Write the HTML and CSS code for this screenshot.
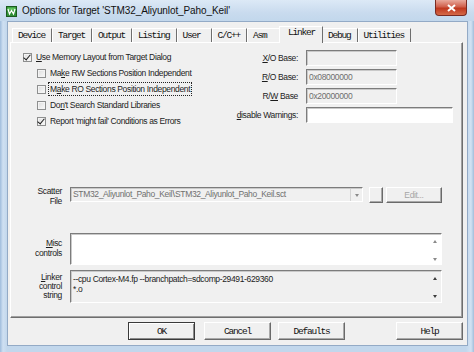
FILE: index.html
```html
<!DOCTYPE html>
<html>
	<head>
		<meta charset="UTF-8">
		<title>Options for Target</title>
		<link rel="stylesheet" href="styles.css">
	</head>
	<body>
		<div class="window">
			<div class="titlebar">
				<svg class="app-icon" width="11" height="11" viewBox="0 0 11 11">
					<rect x="0.5" y="0.5" width="10" height="10" fill="#2f8f35" stroke="#1b5a1e"/>
					<rect x="1.5" y="1.5" width="8" height="3" fill="#5cbf5a"/>
					<polyline points="2,3 3.5,8 5.5,4.5 7.5,8 9,3" fill="none" stroke="#fff" stroke-width="1.2"/>
				</svg>
				<span class="title">Options for Target 'STM32_Aliyunlot_Paho_Keil'</span>
				<div class="close">
					<svg width="9" height="8" viewBox="0 0 9 8">
						<path d="M1 1 L8 7 M8 1 L1 7" stroke="#fff" stroke-width="2"/>
					</svg>
				</div>
			</div>
			<div class="client">
				<ul class="tabs">
					<li>Device</li>
					<li>Target</li>
					<li>Output</li>
					<li>Listing</li>
					<li>User</li>
					<li>C/C++</li>
					<li>Asm</li>
					<li class="active">Linker</li>
					<li>Debug</li>
					<li>Utilities</li>
				</ul>
				<div class="panel">
					<div class="top">
						<div class="checks">
							<div class="check"><span class="box on"></span><span><u>U</u>se Memory Layout from Target Dialog</span></div>
							<div class="check sub"><span class="box"></span><span>Ma<u>k</u>e RW Sections Position Independent</span></div>
							<div class="check sub"><span class="box"></span><span class="focus">M<u>a</u>ke RO Sections Position Independent</span></div>
							<div class="check sub"><span class="box"></span><span>Do<u>n</u>'t Search Standard Libraries</span></div>
							<div class="check sub"><span class="box on"></span><span>Report 'might fail' Conditions as Errors</span></div>
						</div>
						<div class="bases">
							<span class="lbl"><u>X</u>/O Base:</span>
							<div class="field off short"></div>
							<span class="lbl"><u>R</u>/O Base:</span>
							<div class="field off short">0x08000000</div>
							<span class="lbl">R/<u>W</u> Base</span>
							<div class="field off short">0x20000000</div>
							<span class="lbl"><u>d</u>isable Warnings:</span>
							<div class="field"></div>
						</div>
					</div>
					<div class="row scatter">
						<div class="side">Scatter<br>File</div>
						<div class="field off combo">
							<span>STM32_Aliyunlot_Paho_Keil<span class="bslash"></span>STM32_Aliyunlot_Paho_Keil.sct</span>
							<span class="drop"><i class="down"></i></span>
						</div>
						<div class="btn small"></div>
						<div class="btn edit">Edit...</div>
					</div>
					<div class="row misc">
						<div class="side"><u>M</u>isc<br>controls</div>
						<div class="field area white">
							<span class="scroll"><i class="up"></i><i class="down"></i></span>
						</div>
					</div>
					<div class="row linker">
						<div class="side"><u>L</u>inker<br>control<br>string</div>
						<div class="field area">
							<span class="text">--cpu Cortex-M4.fp --branchpatch=sdcomp-29491-629360<br>*.o</span>
							<span class="scroll dark"><i class="up"></i><i class="down"></i></span>
						</div>
					</div>
				</div>
				<div class="buttons">
					<div class="btn push default">OK</div>
					<div class="btn push cancel">Cancel</div>
					<div class="btn push defaults">Defaults</div>
					<div class="btn push help">Help</div>
				</div>
			</div>
		</div>
	</body>
</html>
```

FILE: styles.css
```css
* {
	margin: 0;
	padding: 0;
	box-sizing: border-box;
}
body {
	width: 474px;
	height: 352px;
	overflow: hidden;
	background: #c6d9ed;
	font-family: "Liberation Sans", Arial, sans-serif;
	font-size: 8.5px;
	letter-spacing: -0.35px;
	color: #1c1c1c;
}
u {
	text-decoration: underline;
}
.window {
	width: 474px;
	height: 352px;
	display: flex;
	flex-direction: column;
	background: linear-gradient(90deg, #9fbcdc 0, #cfe0f2 3px, #c2d7ec 7px, #c2d7ec 466px, #d2e2f3 471px, #a3bedb 474px);
}
.titlebar {
	height: 21px;
	display: flex;
	align-items: flex-start;
	padding-left: 6px;
	background: linear-gradient(#dce9f6, #c9dbee 60%, #c2d7ec);
}
.app-icon {
	margin-top: 6px;
}
.title {
	margin: 5px 0 0 5px;
	font-size: 10px;
	letter-spacing: -0.1px;
	color: #111;
}
.close {
	margin-left: auto;
	margin-right: 7px;
	width: 32px;
	height: 16px;
	display: flex;
	align-items: center;
	justify-content: center;
	border: 1px solid #7a2b22;
	border-top: none;
	border-radius: 0 0 4px 4px;
	background: linear-gradient(#e9a99c, #d0604c 45%, #c0381f 55%, #d46a48);
}
.client {
	flex: 1;
	margin: 0 6px 6px 7px;
	background: #f0f0f0;
	border: 1px solid #93aac6;
	display: flex;
	flex-direction: column;
}
.tabs {
	list-style: none;
	height: 20px;
	display: flex;
	align-items: flex-end;
	padding-left: 4px;
	font-family: "Liberation Mono", "Courier New", monospace;
	font-size: 9.5px;
	letter-spacing: -1.2px;
	color: #111;
}
.tabs li {
	height: 14px;
	min-width: 35px;
	padding: 0 6px 0 5px;
	line-height: 13px;
	border-left: 1px solid #fff;
	border-top: 1px solid #fff;
	border-right: 1px solid #6e6e6e;
}
.tabs li.active {
	height: 17px;
	margin: 0 -1px -1px -3px;
	padding: 0 7px 0 8px;
	line-height: 11px;
	background: #f0f0f0;
	position: relative;
	z-index: 1;
}
.panel {
	width: 453px;
	height: 276px;
	margin-left: 2px;
	border-top: 1px solid #fff;
	border-left: 1px solid #fff;
	border-right: 1px solid #6e6e6e;
	border-bottom: 1px solid #6e6e6e;
	box-shadow: inset -1px -1px 0 #a0a0a0;
}
.top {
	display: flex;
	padding: 6px 0 0 12px;
}
.checks {
	width: 213px;
}
.check {
	height: 16px;
	display: flex;
	align-items: center;
	gap: 4px;
}
.check.sub {
	margin-left: 14px;
}
.box {
	width: 9px;
	height: 9px;
	border: 1px solid #8e8f8f;
	background: linear-gradient(135deg, #dcdcdc, #fbfbfb);
	box-shadow: inset 0 0 0 1px #f4f4f4;
	position: relative;
}
.box.on::after {
	content: "";
	position: absolute;
	left: 1px;
	top: -1px;
	width: 3px;
	height: 6px;
	border-right: 1.6px solid #1e1e1e;
	border-bottom: 1.6px solid #1e1e1e;
	transform: rotate(40deg);
}
.focus {
	margin-left: -2px;
	padding: 1px 1px;
	border: 1px dotted #222;
}
.bases {
	display: grid;
	grid-template-columns: 62px 147px;
	grid-auto-rows: 16px;
	column-gap: 8px;
	row-gap: 3px;
	margin-top: 1px;
	align-items: center;
}
.lbl {
	text-align: right;
	white-space: nowrap;
}
.field {
	height: 16px;
	background: #fff;
	border: 1px solid #fff;
	border-top-color: #7c7c7c;
	border-left-color: #7c7c7c;
	box-shadow: inset 1px 1px 0 #c9c9c9;
	padding: 2px 0 0 2px;
	color: #6f6f6f;
	white-space: nowrap;
	overflow: hidden;
}
.field.off {
	background: #f0f0f0;
}
.field.short {
	width: 91px;
}
.row {
	display: flex;
	align-items: flex-start;
}
.side {
	width: 51px;
	margin-right: 8px;
	text-align: right;
	line-height: 9.5px;
}
.scatter {
	margin-top: 58px;
}
.combo {
	width: 293px;
	height: 15px;
	display: flex;
	padding: 1px 0 0 2px;
}
.bslash {
	margin: 0 0.5px;
	color: #555;
}
.bslash::before {
	content: "\5C";
}
.drop {
	margin-left: auto;
	width: 12px;
	height: 12px;
	display: flex;
	align-items: center;
	justify-content: center;
	border-left: 1px solid #d4d4d4;
}
i.down, i.up {
	display: block;
	width: 0;
	height: 0;
	border-left: 2.5px solid transparent;
	border-right: 2.5px solid transparent;
}
i.down {
	border-top: 3px solid #8a8a8a;
}
i.up {
	border-bottom: 3px solid #8a8a8a;
}
.btn {
	height: 16px;
	border-top: 1px solid #fff;
	border-left: 1px solid #fff;
	border-right: 1px solid #6a6a6a;
	border-bottom: 1px solid #6a6a6a;
	box-shadow: inset -1px -1px 0 #a9a9a9;
	background: #f0f0f0;
	display: flex;
	align-items: center;
	justify-content: center;
}
.btn.small {
	width: 14px;
	margin-left: 6px;
}
.btn.edit {
	width: 56px;
	margin-left: 3px;
	color: #a6a6a6;
}
.misc {
	margin-top: 27px;
}
.misc .side {
	padding-top: 6px;
}
.area {
	width: 372px;
	height: 32px;
	display: flex;
	padding: 3px 0 0 2px;
	color: #1c1c1c;
}
.area.white {
	background: #fff;
}
.linker {
	margin-top: 5px;
}
.linker .area {
	height: 33px;
	background: #f0f0f0;
	line-height: 10px;
}
.linker .side {
	padding-top: 3px;
	line-height: 9px;
}
.scroll {
	margin-left: auto;
	width: 12px;
	height: 26px;
	display: flex;
	flex-direction: column;
	align-items: center;
	justify-content: space-between;
	padding: 3px 0 2px;
}
.scroll.dark i.up {
	border-bottom-color: #3c3c3c;
}
.scroll.dark i.down {
	border-top-color: #3c3c3c;
}
.buttons {
	display: flex;
	padding: 4px 0 0 120px;
	font-family: "Liberation Mono", "Courier New", monospace;
	font-size: 9.5px;
	letter-spacing: -1.2px;
	color: #111;
}
.btn.push {
	width: 67px;
	height: 18px;
}
.btn.default {
	border: 1px solid #3a3a3a;
	box-shadow: inset 1px 1px 0 #fff, inset -1px -1px 0 #8a8a8a;
}
.btn.cancel {
	margin-left: 9px;
}
.btn.defaults {
	margin-left: 7px;
}
.btn.help {
	margin-left: 51px;
}
```
